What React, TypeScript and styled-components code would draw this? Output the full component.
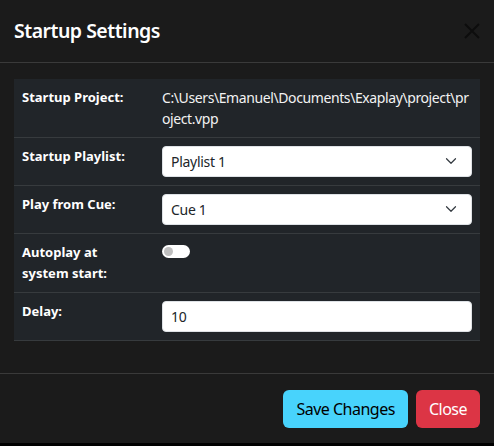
import React from 'react';
import styled, { createGlobalStyle } from 'styled-components';

const GlobalStyle = createGlobalStyle`
  html, body {
    margin: 0;
    padding: 0;
    background: #000;
  }
  body {
    font-family: 'Noto Sans', 'Open Sans', sans-serif;
    font-size: 14px;
    color: #fff;
  }
  * { box-sizing: border-box; }
`;

const Modal = styled.div`
  width: 494px;
  background: #1b1b1b;
  display: flex;
  flex-direction: column;
`;

const Header = styled.div`
  display: flex;
  align-items: center;
  justify-content: space-between;
  padding: 16px 14px;
  border-bottom: 1px solid #3a3a3a;
`;

const Title = styled.h5`
  margin: 0;
  font-size: 19.5px;
  line-height: 30px;
  font-weight: 600;
  letter-spacing: -0.5px;
  color: #fff;
`;

const CloseX = styled.button`
  width: 16px;
  height: 16px;
  padding: 0;
  border: 0;
  background: transparent;
  opacity: 0.5;
  display: flex;
`;

const Body = styled.div`
  padding: 16px 14px;
`;

const Table = styled.table`
  width: 100%;
  border-collapse: collapse;
  background: #212529;
  margin: 0 0 16px;
`;

const Row = styled.tr`
  border-bottom: 1px solid #373b3e;
`;

const Label = styled.th`
  width: 140px;
  padding: 8px;
  text-align: left;
  vertical-align: top;
  font-weight: 700;
  font-size: 13px;
  line-height: 21px;
  color: #fff;
`;

const Cell = styled.td`
  padding: 8px;
  vertical-align: top;
  font-size: 14px;
  line-height: 21px;
  letter-spacing: -0.4px;
  color: #f2f2f2;
  word-break: break-all;
`;

const Field = styled.div`
  position: relative;
  height: 31px;
  display: flex;
  align-items: center;
  padding: 0 8px;
  background: #fff;
  border: 1px solid #dee2e6;
  border-radius: 4px;
  color: #212529;
  font-size: 14px;
  letter-spacing: -0.3px;
`;

const Chevron = styled.svg`
  position: absolute;
  right: 14px;
  top: 8px;
`;

const Switch = styled.div<{ $on?: boolean }>`
  width: 28px;
  height: 13px;
  margin-top: 3px;
  border-radius: 7px;
  background: #fff;
  display: flex;
  align-items: center;
  padding: 0 2px;
  justify-content: ${(p) => (p.$on ? 'flex-end' : 'flex-start')};
`;

const Knob = styled.span`
  width: 9px;
  height: 9px;
  border-radius: 50%;
  background: #bfbfbf;
`;

const Footer = styled.div`
  display: flex;
  justify-content: flex-end;
  gap: 8px;
  padding: 16px 14px 15px;
  border-top: 1px solid #3a3a3a;
`;

const Button = styled.button<{ $variant: 'info' | 'danger' }>`
  height: 38px;
  padding: 0 13px;
  border: 0;
  border-radius: 6px;
  font-family: inherit;
  font-size: 16px;
  letter-spacing: -0.5px;
  background: ${(p) => (p.$variant === 'info' ? '#48d3fc' : '#dc3545')};
  color: ${(p) => (p.$variant === 'info' ? '#000' : '#fff')};
`;

const SelectField: React.FC<{ value: string }> = ({ value }) => (
  <Field>
    {value}
    <Chevron width="12" height="12" viewBox="0 0 16 16">
      <path d="M2 5l6 6 6-6" fill="none" stroke="#343a40" strokeWidth="1.6" strokeLinecap="round" strokeLinejoin="round" />
    </Chevron>
  </Field>
);

export default function App() {
  return (
    <>
      <GlobalStyle />
      <Modal>
        <Header>
          <Title>Startup Settings</Title>
          <CloseX aria-label="Close">
            <svg width="16" height="16" viewBox="0 0 16 16">
              <path d="M1 1l14 14M15 1L1 15" stroke="#000" strokeWidth="2" />
            </svg>
          </CloseX>
        </Header>
        <Body>
          <Table>
            <tbody>
              <Row>
                <Label>Startup Project:</Label>
                <Cell>C:\Users\Emanuel\Documents\Exaplay\project\project.vpp</Cell>
              </Row>
              <Row>
                <Label>Startup Playlist:</Label>
                <Cell><SelectField value="Playlist 1" /></Cell>
              </Row>
              <Row>
                <Label>Play from Cue:</Label>
                <Cell><SelectField value="Cue 1" /></Cell>
              </Row>
              <Row>
                <Label>Autoplay at system start:</Label>
                <Cell>
                  <Switch><Knob /></Switch>
                </Cell>
              </Row>
              <Row>
                <Label>Delay:</Label>
                <Cell><Field>10</Field></Cell>
              </Row>
            </tbody>
          </Table>
        </Body>
        <Footer>
          <Button $variant="info">Save Changes</Button>
          <Button $variant="danger">Close</Button>
        </Footer>
      </Modal>
    </>
  );
}
